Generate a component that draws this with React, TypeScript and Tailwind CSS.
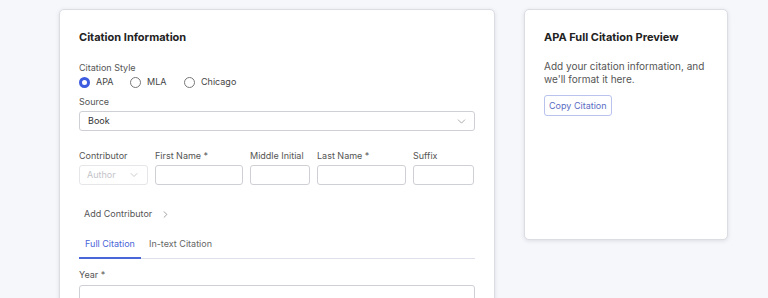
import { ChevronDown, ChevronRight } from 'lucide-react';

const font = { fontFamily: 'Inter, "Noto Sans", sans-serif' };

function Radio({ label, checked, width }: { label: string; checked?: boolean; width: string }) {
    return (
        <label className={`flex items-center gap-[6px] text-[9px] text-[#444] ${width}`}>
            {checked ? (
                <span className="w-[11px] h-[11px] rounded-full border-[3px] border-[#3d5ce0] bg-white" />
            ) : (
                <span className="w-[11px] h-[11px] rounded-full border border-[#777] bg-white" />
            )}
            {label}
        </label>
    );
}

function Field({ label, width }: { label: string; width: string }) {
    return (
        <div className={`flex flex-col ${width}`}>
            <span className="h-[12px] leading-[12px] text-[9px] text-[#555]">{label}</span>
            <div className="mt-[3px] h-[20px] rounded-[3px] border border-[#cfd0d6] bg-white" />
        </div>
    );
}

export default function App() {
    return (
        <div className="min-h-screen bg-[#f6f7fb] pt-[9px] pl-[59px] flex items-start gap-[29px]" style={font}>
            {/* form */}
            <div className="w-[436px] h-[320px] rounded-[5px] border border-[#dcdde3] bg-white shadow-[0_1px_4px_rgba(30,30,60,0.12)] px-[19px] pt-[19px]">
                <h2 className="h-[16px] leading-[16px] text-[11px] font-bold text-[#222]">Citation Information</h2>

                <div className="mt-[17px] h-[12px] leading-[12px] text-[9px] text-[#555]">Citation Style</div>
                <div className="mt-[1px] h-[14px] flex items-center">
                    <Radio label="APA" checked width="w-[51px]" />
                    <Radio label="MLA" width="w-[54px]" />
                    <Radio label="Chicago" width="w-[70px]" />
                </div>

                <div className="mt-[7px] h-[12px] leading-[12px] text-[9px] text-[#555]">Source</div>
                <div className="mt-[3px] h-[20px] rounded-[3px] border border-[#cfd0d6] bg-white flex items-center justify-between pl-[8px] pr-[6px]">
                    <span className="text-[9px] text-[#333]">Book</span>
                    <ChevronDown className="w-[13px] h-[13px] text-[#999]" strokeWidth={1.5} />
                </div>

                <div className="mt-[19px] flex gap-[7px]">
                    <div className="flex flex-col w-[69px]">
                        <span className="h-[12px] leading-[12px] text-[9px] text-[#555]">Contributor</span>
                        <div className="mt-[3px] h-[20px] rounded-[3px] border border-[#e6e6ea] bg-white flex items-center justify-between pl-[7px] pr-[7px]">
                            <span className="text-[9px] text-[#c4c4c8]">Author</span>
                            <ChevronDown className="w-[12px] h-[12px] text-[#bbb]" strokeWidth={1.5} />
                        </div>
                    </div>
                    <Field label="First Name *" width="w-[88px]" />
                    <Field label="Middle Initial" width="w-[60px]" />
                    <Field label="Last Name *" width="w-[89px]" />
                    <Field label="Suffix" width="w-[61px]" />
                </div>

                <div className="mt-[22px] h-[14px] pl-[5px] flex items-center gap-[8px] text-[9px] text-[#555]">
                    Add Contributor
                    <ChevronRight className="w-[11px] h-[11px] text-[#777]" strokeWidth={1.5} />
                </div>

                <div className="mt-[16px] flex border-b border-[#dfe1ea]">
                    <div className="w-[62px] -mb-px pb-[6px] border-b-2 border-[#4a66d8] text-center text-[9px] leading-[14px] text-[#4a66d8]">
                        Full Citation
                    </div>
                    <div className="pl-[8px] pb-[6px] text-[9px] leading-[14px] text-[#666]">In-text Citation</div>
                </div>

                <div className="mt-[10px] h-[12px] leading-[12px] text-[9px] text-[#555]">Year *</div>
                <div className="mt-[4px] h-[20px] rounded-[3px] border border-[#cfd0d6] bg-white" />
            </div>

            {/* preview */}
            <div className="w-[204px] h-[231px] rounded-[5px] border border-[#dcdde3] bg-white shadow-[0_1px_4px_rgba(30,30,60,0.12)] px-[19px] pt-[19px]">
                <h2 className="h-[16px] leading-[16px] text-[11px] font-bold text-[#222]">APA Full Citation Preview</h2>
                <p className="mt-[15px] text-[10px] leading-[13px] text-[#555]">
                    Add your citation information, and we'll format it here.
                </p>
                <button className="mt-[9px] h-[21px] px-[4px] rounded-[3px] border border-[#b9c3ee] bg-white text-[9px] text-[#5a6cc4]">
                    Copy Citation
                </button>
            </div>
        </div>
    );
}
